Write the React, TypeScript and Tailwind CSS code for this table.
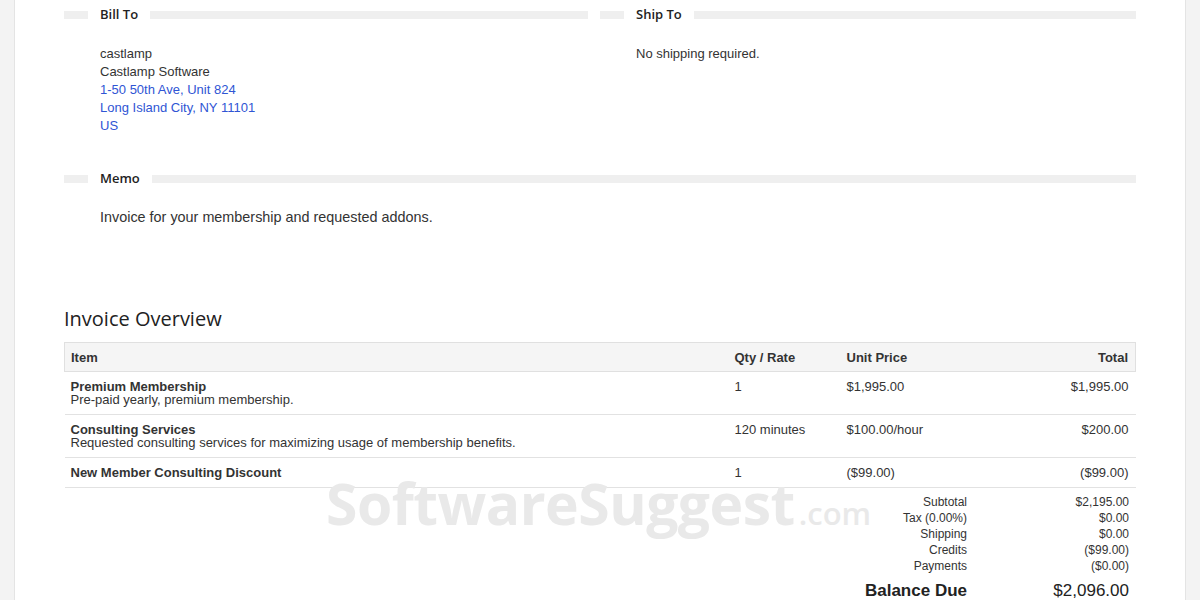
const SectionTitle = ({ title }: { title: string }) => (
  <div className="flex items-center h-5">
    <div className="w-6 h-2 bg-[#efefef]" />
    <span className="mx-3 text-[13px] font-semibold text-[#222] font-['Open_Sans',sans-serif]">{title}</span>
    <div className="flex-1 h-2 bg-[#efefef]" />
  </div>
)

const items = [
  { name: 'Premium Membership', desc: 'Pre-paid yearly, premium membership.', qty: '1', price: '$1,995.00', total: '$1,995.00' },
  {
    name: 'Consulting Services',
    desc: 'Requested consulting services for maximizing usage of membership benefits.',
    qty: '120 minutes',
    price: '$100.00/hour',
    total: '$200.00',
  },
  { name: 'New Member Consulting Discount', qty: '1', price: '($99.00)', total: '($99.00)' },
]

const totals = [
  ['Subtotal', '$2,195.00'],
  ['Tax (0.00%)', '$0.00'],
  ['Shipping', '$0.00'],
  ['Credits', '($99.00)'],
  ['Payments', '($0.00)'],
]

export default function App() {
  return (
    <div className="flex h-[600px] overflow-hidden bg-[#f3f3f3] text-[#333] font-['Liberation_Sans',Arial,sans-serif]">
      <div className="w-[15px] border-r border-[#e4e4e4]" />
      <div className="relative flex-1 bg-white pl-[49px] pr-[49px] pt-[5px]">
        <div className="grid grid-cols-2">
          <div className="pr-3">
            <SectionTitle title="Bill To" />
            <div className="mt-5 pl-9 text-[13px] leading-[18px]">
              <div>castlamp</div>
              <div>Castlamp Software</div>
              <div className="text-[#2f55d4]">1-50 50th Ave, Unit 824</div>
              <div className="text-[#2f55d4]">Long Island City, NY 11101</div>
              <div className="text-[#2f55d4]">US</div>
            </div>
          </div>
          <div>
            <SectionTitle title="Ship To" />
            <div className="mt-5 pl-9 text-[13px] leading-[18px]">No shipping required.</div>
          </div>
        </div>

        <div className="mt-[34px]">
          <SectionTitle title="Memo" />
          <p className="mt-[18px] pl-9 text-[14.4px] leading-5">Invoice for your membership and requested addons.</p>
        </div>

        <h2 className="mt-[77px] text-[20px] leading-[30px] text-[#222] font-['Open_Sans',sans-serif]">Invoice Overview</h2>

        <table className="mt-2 w-full border-collapse text-[13px] leading-[13px]">
          <thead>
            <tr className="bg-[#f5f5f5] border border-[#e0e0e0]">
              <th className="pl-[6px] pr-[7px] h-[29px] text-left font-bold">Item</th>
              <th className="w-[112px] px-[7px] text-left font-bold">Qty / Rate</th>
              <th className="w-[140px] px-[7px] text-left font-bold">Unit Price</th>
              <th className="w-[156px] px-[7px] text-right font-bold">Total</th>
            </tr>
          </thead>
          <tbody>
            {items.map((item) => (
              <tr key={item.name} className="border-b border-[#e2e2e2] align-top">
                <td className="pl-[6px] pr-[7px] py-2">
                  <div className="font-bold">{item.name}</div>
                  {item.desc && <div>{item.desc}</div>}
                </td>
                <td className="px-[7px] py-2">{item.qty}</td>
                <td className="px-[7px] py-2">{item.price}</td>
                <td className="px-[7px] py-2 text-right">{item.total}</td>
              </tr>
            ))}
          </tbody>
        </table>

        <div className="mt-1.5 flex justify-end pr-[7px]">
          <div className="grid grid-cols-[auto_162px] text-[12px] leading-4 text-right">
            {totals.map(([label, value]) => (
              <div key={label} className="contents">
                <div>{label}</div>
                <div>{value}</div>
              </div>
            ))}
            <div className="mt-[5px] text-[17px] leading-6 font-bold text-[#222]">Balance Due</div>
            <div className="mt-[5px] text-[17px] leading-6 text-[#222]">$2,096.00</div>
          </div>
        </div>

        <div className="absolute left-[311px] top-[470px] pointer-events-none select-none flex items-baseline text-[#e9e9e9] font-['Open_Sans',sans-serif] font-bold">
          <span className="text-[57px] leading-[66px] tracking-[-0.5px]">SoftwareSuggest</span>
          <span className="ml-1 text-[31px] leading-[66px] font-semibold">.com</span>
        </div>
      </div>
      <div className="w-[15px] border-l border-[#e4e4e4]" />
    </div>
  )
}
